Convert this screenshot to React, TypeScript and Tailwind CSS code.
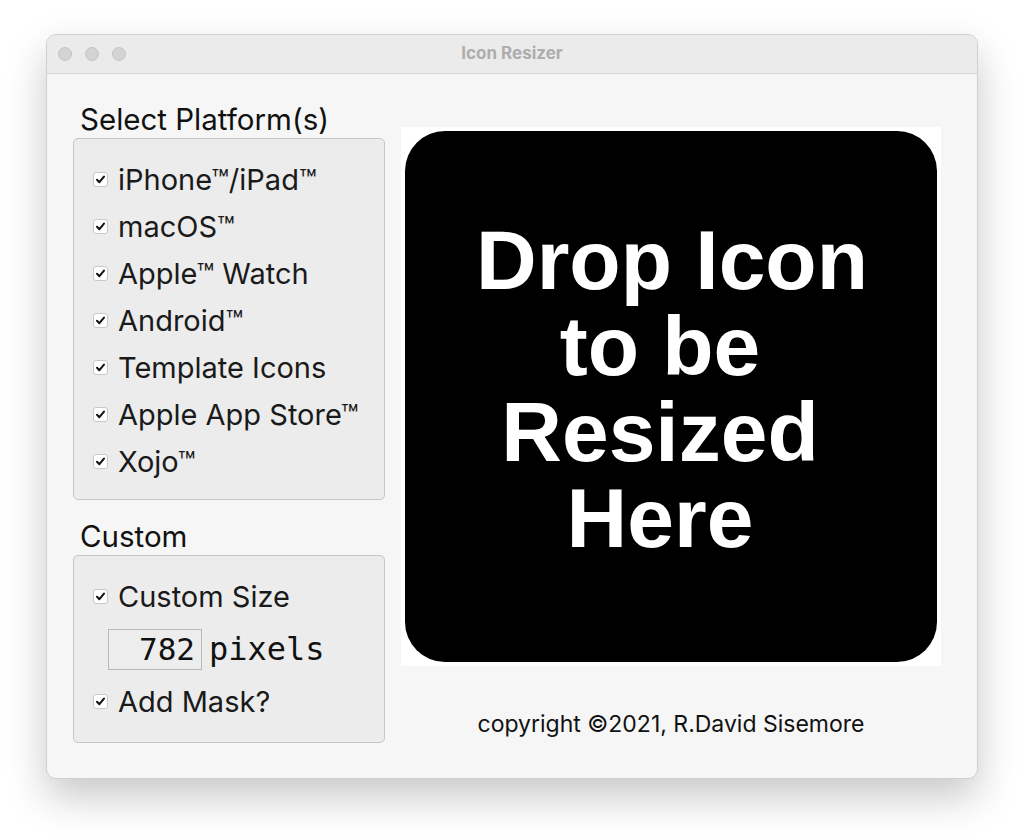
import React from 'react';

const platforms = [
  'iPhone™/iPad™',
  'macOS™',
  'Apple™ Watch',
  'Android™',
  'Template Icons',
  'Apple App Store™',
  'Xojo™',
];

const mono = { fontFamily: '"DejaVu Sans Mono", "Liberation Mono", monospace' };

const Check = () => (
  <span className="w-[15px] h-[15px] rounded-[3px] border border-[#c9c9c9] bg-white flex items-center justify-center shrink-0">
    <svg width="11" height="11" viewBox="0 0 11 11">
      <path d="M2 5.8 L4.4 8.2 L9 2.6" fill="none" stroke="#111" strokeWidth="2" strokeLinecap="round" strokeLinejoin="round" />
    </svg>
  </span>
);

const Row = ({ label }: { label: string }) => (
  <div className="h-[47px] flex items-center pl-[19px] gap-[10px]">
    <Check />
    <span className="text-[29px] leading-none text-[#1a1a1a]">{label}</span>
  </div>
);

export default function App() {
  return (
    <div className="min-h-[836px] w-[1024px] bg-white pt-[34px] pl-[46px]" style={{ fontFamily: 'Inter, "Liberation Sans", sans-serif' }}>
      <div className="w-[932px] h-[745px] rounded-[10px] border border-[#cfcfcf] bg-[#f6f6f6] overflow-hidden shadow-[0_18px_40px_rgba(0,0,0,0.22)] flex flex-col">
        {/* title bar */}
        <div className="h-[39px] bg-[#ebebeb] border-b border-[#d6d6d6] flex items-center relative shrink-0">
          <div className="flex gap-[13px] pl-[11px]">
            <span className="w-[14px] h-[14px] rounded-full bg-[#d3d3d3] border border-[#c4c4c4]" />
            <span className="w-[14px] h-[14px] rounded-full bg-[#d3d3d3] border border-[#c4c4c4]" />
            <span className="w-[14px] h-[14px] rounded-full bg-[#d3d3d3] border border-[#c4c4c4]" />
          </div>
          <div className="absolute inset-0 flex items-center justify-center text-[17px] font-bold text-[#adadad] pointer-events-none">
            Icon Resizer
          </div>
        </div>

        {/* content */}
        <div className="flex pl-[26px] gap-[16px]">
          <div className="w-[312px] flex flex-col pt-[28px]">
            <div className="h-[36px] flex items-center pl-[7px] text-[29.5px] leading-none text-[#111]">Select Platform(s)</div>
            <div className="h-[362px] rounded-[5px] border border-[#c6c6c6] bg-[#ececec] pt-[17px]">
              {platforms.map((p) => (
                <Row key={p} label={p} />
              ))}
            </div>

            <div className="mt-[19px] h-[36px] flex items-center pl-[7px] text-[29.5px] leading-none text-[#111]">Custom</div>
            <div className="h-[188px] rounded-[5px] border border-[#c6c6c6] bg-[#ececec] pt-[17px]">
              <Row label="Custom Size" />
              <div className="h-[58px] flex items-center pl-[34px] gap-[7px]">
                <div className="w-[94px] h-[41px] border border-[#b8b8b8] bg-[#ededed] flex items-center justify-end pr-[6px] text-[31px] leading-none text-[#111]" style={mono}>
                  782
                </div>
                <span className="text-[32px] leading-none text-[#111]" style={mono}>pixels</span>
              </div>
              <Row label="Add Mask?" />
            </div>
          </div>

          <div className="flex flex-col pt-[53px]">
            <div className="w-[540px] h-[539px] bg-white flex items-center justify-center">
              <div className="w-[532px] h-[531px] rounded-[40px] bg-black flex items-center justify-center pb-[16px] pr-[22px]">
                <div className="text-white font-bold text-center text-[84px] leading-[86px]" style={{ fontFamily: '"Liberation Sans", Arial, sans-serif' }}>
                  <div className="pl-[24px]">Drop Icon</div>
                  <div>to be</div>
                  <div>Resized</div>
                  <div>Here</div>
                </div>
              </div>
            </div>
            <div className="mt-[47px] text-center text-[23px] leading-none text-[#111]">copyright ©2021, R.David Sisemore</div>
          </div>
        </div>
      </div>
    </div>
  );
}
